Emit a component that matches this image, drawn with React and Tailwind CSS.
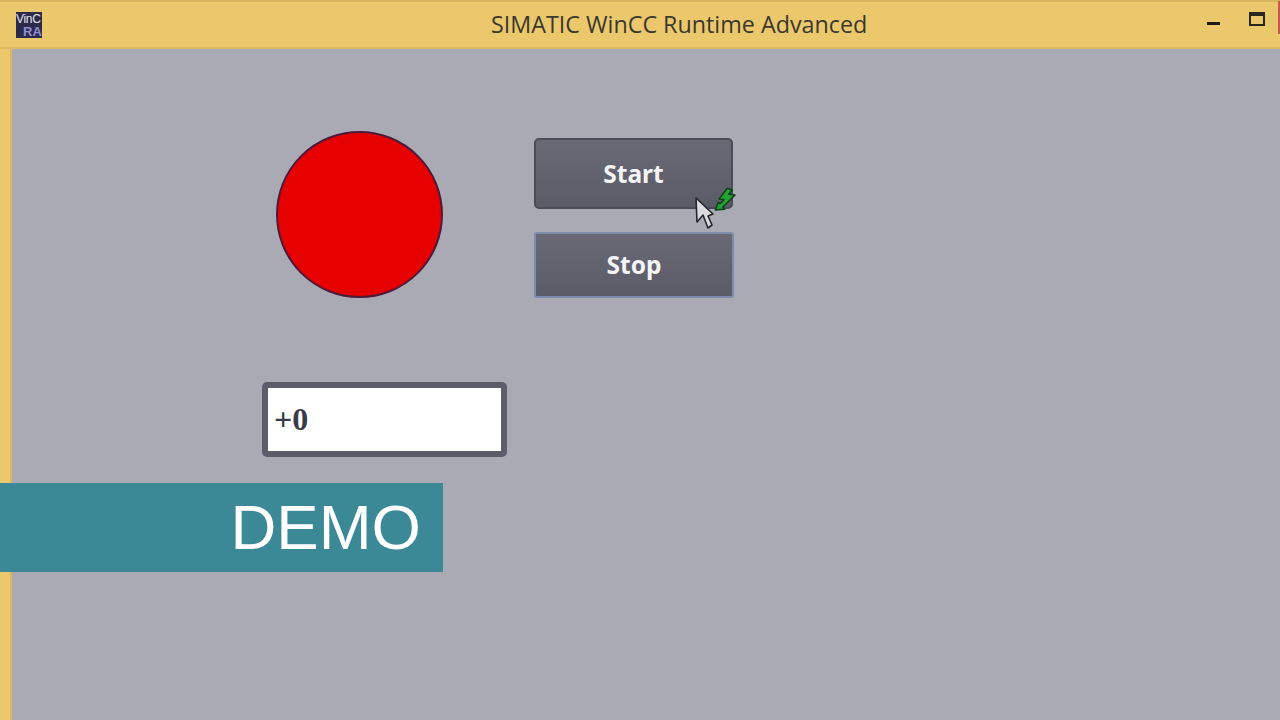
import React from 'react';

const WinccIcon = () => (
  <div className="flex h-[26px] w-[26px] flex-col overflow-hidden bg-[#2c2a4a] font-['Liberation_Sans',sans-serif] leading-none">
    <span className="mt-px whitespace-nowrap text-[12px] tracking-[-0.3px] text-[#e4e4ee]">VinC</span>
    <span className="whitespace-nowrap pl-[7px] text-[13px] font-bold text-[#8f8fd0]">RA</span>
  </div>
);

const Cursor = () => (
  <svg className="absolute left-[678px] top-[136px]" width="50" height="50" viewBox="0 0 50 50">
    {/* arrow pointer */}
    <path d="M6 13 L7 37 L13 30 L18 43 L22 40 L18 31 L23 29 Z" fill="#dcdce0" stroke="#26262c" strokeWidth="1.6" strokeLinejoin="round" />
    {/* green bolt */}
    <path d="M37.3 3.3 L29 14 L34 14.7 L30 18.7 L28.3 17.3 L25.3 25 L34.7 24.3 L32.7 22.3 L45 10 L38.7 9.3 L42.3 5 Z" fill="#22a030" stroke="#10401a" strokeWidth="1.5" strokeLinejoin="round" />
  </svg>
);

const HmiButton = ({ label, className }) => (
  <div className={`absolute flex items-center justify-center bg-gradient-to-b from-[#6a6a76] to-[#5b5b68] pt-px font-['Noto_Sans',sans-serif] text-[24.5px] font-bold text-[#f4f4f6] ${className}`}>
    {label}
  </div>
);

export default function App() {
  return (
    <div className="flex h-[720px] w-[1280px] flex-col overflow-hidden bg-[#ebc86b]">
      {/* title bar */}
      <div className="flex h-[49px] shrink-0 items-center border-t-2 border-b-2 border-t-[#d8b65f] border-b-[#d9b85f] pl-4">
        <WinccIcon />
        <div className="ml-[449px] whitespace-nowrap font-['Open_Sans',sans-serif] text-[23.3px] text-[#3a3830]">SIMATIC WinCC Runtime Advanced</div>
        <div className="ml-auto mt-[-2px] h-[3px] w-[13px] bg-[#1c1b16]" />
        <div className="mb-[12px] ml-[29px] h-[14px] w-[16px] border-2 border-t-[4px] border-[#2a281e]" />
        <div className="mb-[14px] ml-[13px] h-[33px] w-[2px] bg-[#c8584a]" />
      </div>

      <div className="flex min-h-0 flex-1">
        {/* left window frame */}
        <div className="w-3 shrink-0 border-r-2 border-r-[#d9b85f]" />

        {/* runtime screen: objects sit at free coordinates on the canvas */}
        <div className="relative flex-1 bg-[#aaaab4]">
          <div className="absolute left-[264px] top-[82px] h-[167px] w-[167px] rounded-full border-2 border-[#4f1a3a] bg-[#e60000]" />
          <HmiButton label="Start" className="left-[522px] top-[89px] h-[71px] w-[199px] rounded-[5px] border-2 border-[#4c4c58]" />
          <HmiButton label="Stop" className="left-[522px] top-[183px] h-[66px] w-[200px] rounded-[3px] border-2 border-[#7b8cac]" />
          <Cursor />
          <div className="absolute left-[250px] top-[333px] flex h-[75px] w-[245px] items-center rounded-[5px] border-[6px] border-[#5d5d69] bg-white pb-[2px] pl-[6px] font-['Liberation_Serif',serif] text-[32px] font-bold text-[#3b3b48]">
            +0
          </div>
          <div className="absolute -left-3 top-[434px] flex h-[89px] w-[443px] items-center justify-end bg-[#3b8897] pr-[22px] font-['Liberation_Sans',sans-serif] text-[63.5px] text-white">
            DEMO
          </div>
        </div>
      </div>
    </div>
  );
}
